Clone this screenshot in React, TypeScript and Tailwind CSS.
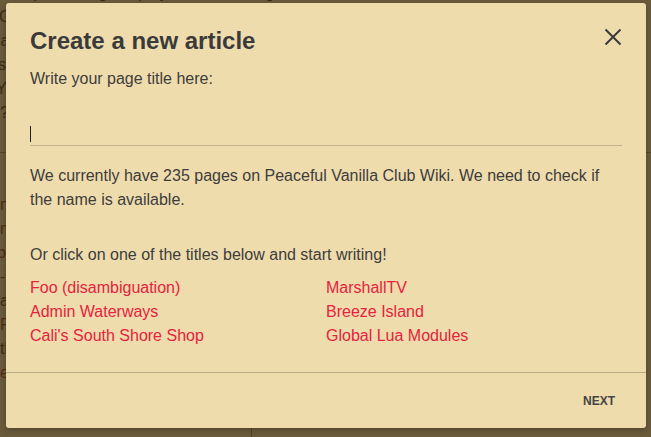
import { useState } from 'react';

const titles = [
  'Foo (disambiguation)',
  'MarshallTV',
  'Admin Waterways',
  'Breeze Island',
  "Cali's South Shore Shop",
  'Global Lua Modules',
];

function CloseIcon() {
  return (
    <svg width="18" height="18" viewBox="0 0 18 18" className="mt-[1px] shrink-0 text-[#3a3a3a]">
      <path d="M1.5 1.5 L16.5 16.5 M16.5 1.5 L1.5 16.5" stroke="currentColor" strokeWidth="2" />
    </svg>
  );
}

function BackgroundPage() {
  return (
    <div className="absolute inset-0 bg-[#d9c79b] text-[#3b2a14] text-[16px] leading-[24px] pl-0 -mt-[19px]">
      <p className="whitespace-nowrap -ml-[40px] pl-[60px]">a peaceful gameplay, hard/normal gamemode</p>
      <p className="-ml-[1px]">G</p>
      <p className="-ml-[3px]">ia</p>
      <p className="-ml-[2px]">s</p>
      <p className="-ml-[4px]">Ye</p>
      <p>?.</p>
      <div className="h-[28px] border-b border-[#3b2a14]/40" />
      <div className="h-[40px]" />
      <div className="text-[#8a2a10]">
        <p>n</p>
        <p>m</p>
        <p className="-ml-[3px]">bo</p>
        <p>-</p>
        <p className="text-[#3b2a14]">a</p>
        <p>F</p>
        <p className="text-[#3b2a14]">th</p>
        <p>e</p>
      </div>
      <div className="absolute left-[251px] top-[420px] h-[40px] border-l border-[#3b2a14]/50" />
      <div className="absolute inset-0 bg-[#3b2e12]/70" />
    </div>
  );
}

export default function App() {
  const [title] = useState('');

  return (
    <div
      className="relative w-[651px] h-[437px] overflow-hidden"
      style={{ fontFamily: '"Liberation Sans", Arial, sans-serif' }}
    >
      <BackgroundPage />
      <div className="relative pt-[3px] pl-[6px]">
        <div className="w-[640px] h-[425px] rounded-[3px] bg-[#efdcac] flex flex-col shadow-[0_2px_6px_rgba(0,0,0,0.25)]">
          <div className="px-6 pt-6 flex-1">
            <div className="flex items-start justify-between">
              <h2 className="text-[24px] leading-[28px] font-bold text-[#3a3a3a]">Create a new article</h2>
              <CloseIcon />
            </div>
            <p className="mt-[12px] text-[16px] leading-[24px] text-[#3d3d3d]">Write your page title here:</p>
            <div className="mt-[22px] h-[33px] border-b border-[#c4b48d] flex items-end pb-[3px]">
              <span className="text-[16px] text-[#333]">{title}</span>
              <span className="w-px h-[16px] bg-[#222]" />
            </div>
            <p className="mt-[18px] text-[16px] leading-[24px] text-[#3d3d3d]">
              We currently have 235 pages on Peaceful Vanilla Club Wiki. We need to check if the name is available.
            </p>
            <p className="mt-[31px] text-[16px] leading-[24px] text-[#3d3d3d]">
              Or click on one of the titles below and start writing!
            </p>
            <ul className="mt-[9px] grid grid-cols-2 text-[16px] leading-[24px]">
              {titles.map((t) => (
                <li key={t}>
                  <a href="#" className="text-[#e5223f]">
                    {t}
                  </a>
                </li>
              ))}
            </ul>
          </div>
          <div className="h-[56px] border-t border-[#b9aa88] flex items-center justify-end pr-[31px]">
            <button className="text-[12px] font-bold text-[#444] uppercase">Next</button>
          </div>
        </div>
      </div>
    </div>
  );
}
